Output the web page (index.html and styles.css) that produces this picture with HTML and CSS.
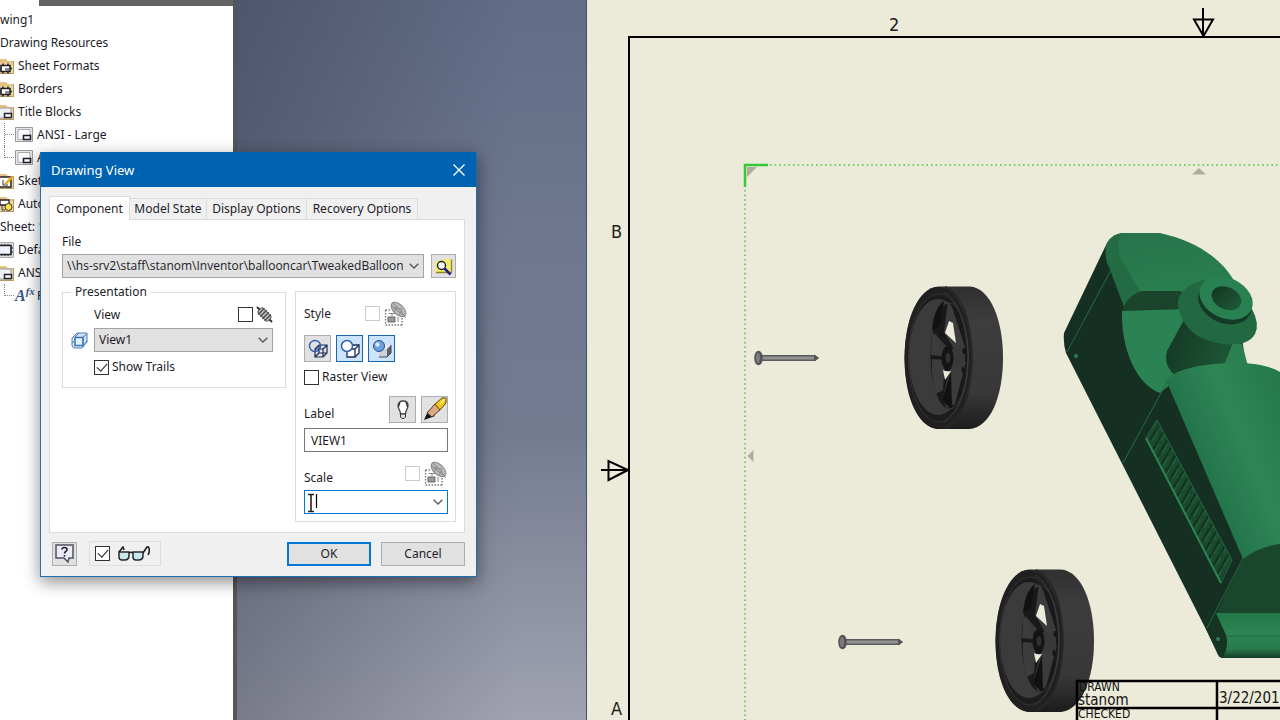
FILE: index.html
```html
<!DOCTYPE html>
<html lang="en">
<head>
<meta charset="utf-8">
<title>Drawing View</title>
<link rel="stylesheet" href="styles.css">
</head>
<body>
<svg class="defs" aria-hidden="true">
  <symbol id="i-folder" viewBox="0 0 16 16"><path d="M0 1h8l2 2h6v13H0z" fill="#e3c283"/><path d="M0 5h16v11H0z" fill="#efd6a0"/><path d="M15.500 3v12.500H0" fill="none" stroke="#b89862"/></symbol>
  <symbol id="i-border" viewBox="0 0 16 16"><use href="#i-folder"/><path d="M3 7.500h9v6H3z" fill="#fff" stroke="#222" stroke-width="1.600"/><path d="M5 5.500v2m5-2v2m-5 6v2m5-2v2M1 10.500h2m9 0h2" stroke="#222" stroke-width="1.600"/><path d="M7 10h4v3H7z" fill="#889"/></symbol>
  <symbol id="i-title" viewBox="0 0 16 16"><use href="#i-folder"/><path d="M0 4h13v10H0z" fill="#eef0f6" stroke="#99a"/><path d="M6.500 9.500h7v4h-7z" fill="#fff" stroke="#223" stroke-width="1.500"/></symbol>
  <symbol id="i-block" viewBox="0 0 18 16"><path d="M.5.500h17v14H.5z" fill="#e8e8ec" stroke="#999"/><path d="M3 2.500h12v10H3z" fill="#fafafa" stroke="#aaa"/><path d="M8.500 8.500h7v4h-7z" fill="#fff" stroke="#1c1c30" stroke-width="1.600"/></symbol>
  <symbol id="i-sketch" viewBox="0 0 16 16"><use href="#i-folder"/><path d="M1 4h12v10H1z" fill="#fff" stroke="#222" stroke-width="1.500"/><path d="M5 7v5h5" fill="none" stroke="#333"/><path d="M6 11l7-8 2 2-7 7z" fill="#e6a817"/></symbol>
  <symbol id="i-auto" viewBox="0 0 16 16"><use href="#i-folder"/><path d="M2 4h9v5H2z" fill="#fff" stroke="#222" stroke-width="1.300"/><circle cx="10.500" cy="11" r="3.500" fill="#ffe14a" stroke="#333"/><path d="M4 9v5h3" fill="none" stroke="#333"/></symbol>
  <symbol id="i-sheet" viewBox="0 0 16 16"><path d="M0 .5h15.500v15H0z" fill="#ddd" stroke="#aaa"/><path d="M1 3.500h12v9H1z" fill="#eef3ff" stroke="#222" stroke-width="1.600"/><path d="M4 2v2m3-2v2m3-2v2m-6 8v2m3-2v2m3-2v2M13 6h2m-2 4h2" stroke="#222"/></symbol>
  <symbol id="i-chev" viewBox="0 0 10 6"><path d="M.7.700 5 5 9.300.7" fill="none" stroke="#555" stroke-width="1.300"/></symbol>
  <symbol id="i-inherit" viewBox="0 0 24 25"><g fill="none" stroke="#777" stroke-width="1.400" stroke-dasharray="1.500 1.500"><path d="M1.500 9v15h17M1.500 9h6M18 17v7"/></g><path d="M4 16h7v5H4z" fill="#999" stroke="#666"/><path d="M8 12v3m6 1v5M5 12.500h6" stroke="#888"/><ellipse cx="14.500" cy="8.500" rx="9" ry="5" transform="rotate(43 14.500 8.500)" fill="#bbb" stroke="#888"/><path d="M7 4l15 13M9 2l12 13M13 5l-3 6m8-2-4 6m-5-8 9 1" stroke="#888" fill="none"/></symbol>
  <symbol id="wheel" viewBox="0 0 100 144" overflow="visible">
    <path d="M34 .5H66C86 2 99 33 99 72s-13 69-33 71H34C13 141 .5 110 .5 72S14 2 34 .5z" fill="url(#tire)"/>
    <ellipse cx="34" cy="72" rx="33.500" ry="71" fill="#202020"/>
    <ellipse cx="34.500" cy="72" rx="30" ry="64" fill="#1c1c1c" stroke="#333"/>
    <ellipse cx="34" cy="71" rx="29" ry="58" fill="#3b3b3b"/>
    <ellipse cx="45" cy="70" rx="19" ry="53" fill="#191919" stroke="#444" stroke-width=".7"/>
    <path d="M28 46L46 64l-1 7-18-2zM28 73l13 1-2 30-7 4c-3-9-5-24-4-35zM46 56L40 46l4-31 4 6 13 40-5 14zM62 76L51 118 43 122l-5-8 8-31z" fill="#3c3c3c"/>
    <path d="M28 44q2-22 12-29l-4 25zM38 114l9-28 1 36q-6-2-10-8z" fill="#111"/>
    <path d="M45 35L41 47l11 10-3-20zM39 84l2 10 6-9q-5 1-8-1z" fill="#ecead9"/>
    <path d="M30 46L44 63h9l8-3v20l-9 3-8-2z" fill="#393939"/>
    <ellipse cx="43.500" cy="72" rx="6" ry="12" fill="#141414"/><ellipse cx="44" cy="72" rx="2.500" ry="5" fill="#303030"/>
    <ellipse cx="60" cy="65" rx="1.500" ry="3" fill="#151515"/><ellipse cx="59" cy="84" rx="1.500" ry="3" fill="#151515"/>
    <path d="M41 1q25 11 27 71-2 58-27 70" fill="none" stroke="#272727" stroke-width="2"/>
    <path d="M40 6q21 12 24 66-2 50-24 64" fill="none" stroke="#404040" stroke-width=".8"/>
  </symbol>
  <symbol id="screw" viewBox="0 0 66 16"><path d="M8 5h53l4 3-4 3H8z" fill="url(#metal)"/><path d="M60 4.500l5 3.500-5 3.500z" fill="#555"/><ellipse cx="4.500" cy="8" rx="4.300" ry="7.300" fill="#555"/><ellipse cx="4" cy="8" rx="2" ry="5" fill="#7c7c7c"/></symbol>
</svg>

<main class="app">
  <aside class="browser">
    <ul class="tree">
      <li>wing1</li>
      <li>Drawing Resources</li>
      <li><svg class="ico"><use href="#i-border"/></svg>Sheet Formats</li>
      <li><svg class="ico"><use href="#i-border"/></svg>Borders</li>
      <li><svg class="ico"><use href="#i-title"/></svg>Title Blocks</li>
      <li class="child"><svg class="ico wide"><use href="#i-block"/></svg>ANSI - Large</li>
      <li class="child last"><svg class="ico wide"><use href="#i-block"/></svg>A</li>
      <li><svg class="ico"><use href="#i-sketch"/></svg>Sketch</li>
      <li><svg class="ico"><use href="#i-auto"/></svg>AutoCAD</li>
      <li>Sheet: 1</li>
      <li><svg class="ico"><use href="#i-sheet"/></svg>Default</li>
      <li><svg class="ico"><use href="#i-title"/></svg>ANSI</li>
      <li class="child last"><span class="fx">A<sup>fx</sup></span>Field</li>
    </ul>
  </aside>

  <section class="desk"></section>

  <section class="sheet">
    <svg class="drawing" viewBox="586 0 694 720" preserveAspectRatio="xMinYMin slice">
      <defs>
        <linearGradient id="tire" x1="0" y1="0" x2="0" y2="1"><stop offset="0" stop-color="#303030"/><stop offset=".25" stop-color="#3d3d3d"/><stop offset=".75" stop-color="#383838"/><stop offset="1" stop-color="#1c1c1c"/></linearGradient>
        <linearGradient id="metal" x1="0" y1="0" x2="0" y2="1"><stop offset="0" stop-color="#4b4b4b"/><stop offset=".5" stop-color="#a0a0a0"/><stop offset="1" stop-color="#4d4d4d"/></linearGradient>
        <linearGradient id="cover" gradientUnits="userSpaceOnUse" x1="1180" y1="470" x2="1290" y2="425"><stop offset="0" stop-color="#1c5536"/><stop offset=".14" stop-color="#23724a"/><stop offset=".6" stop-color="#2e8655"/><stop offset="1" stop-color="#267a4b"/></linearGradient>
        <linearGradient id="roof" x1="0" y1="0" x2=".3" y2="1"><stop offset="0" stop-color="#27734a"/><stop offset="1" stop-color="#298150"/></linearGradient>
        <linearGradient id="neck" x1="0" y1="0" x2="1" y2=".3"><stop offset="0" stop-color="#133522"/><stop offset="1" stop-color="#1d5536"/></linearGradient>
        <linearGradient id="axle" x1="0" y1="0" x2="0" y2="1"><stop offset="0" stop-color="#257849"/><stop offset=".45" stop-color="#2c8553"/><stop offset=".8" stop-color="#287a4b"/><stop offset="1" stop-color="#143c26"/></linearGradient>
        <pattern id="slats" width="9" height="13" patternUnits="userSpaceOnUse" patternTransform="rotate(-4)"><path d="M0 13L9 0" stroke="#12301f" stroke-width="2"/><path d="M2 14L11 1" stroke="#266c45"/></pattern>
      </defs>
      <path d="M586.500 0V720" stroke="#454a70"/>
      <g fill="none" stroke="#000" stroke-width="2">
        <path d="M629 720V37H1280"/>
        <path d="M1203 8V36M1194 19.500H1213L1203.500 36zM601 470H628M608.500 461V480L628 470z"/>
      </g>
      <g class="zone"><text x="889" y="31">2</text><text x="611" y="238">B</text><text x="611" y="715">A</text></g>
      <path d="M770 165H1280M745 190V720" fill="none" stroke="#4cc84c" stroke-width="1.500" stroke-dasharray="1.600 3"/>
      <path d="M745 187V165H768" fill="none" stroke="#34c838" stroke-width="2.500"/>
      <path d="M747 167H757L747 177zM1192 174.500L1199 168l7 6.500zM747.500 456l6-6v12z" fill="#aeac9f"/>
      <use href="#screw" x="754" y="350" width="66" height="16"/>
      <use href="#screw" x="838" y="634" width="66" height="16"/>
      <use href="#wheel" x="904" y="286" width="100" height="144"/>
      <use href="#wheel" x="995" y="569" width="100" height="144"/>
      <path d="M1064 333L1107 243Q1113 233 1124 233L1234 282 1246 366 1280 380V657H1220L1066 353Q1063 343 1064 333z" fill="#153022"/>
      <path d="M1107 243Q1113 233 1124 233H1160C1196 241 1222 258 1236 284L1210 290 1180 292H1142L1125 309 1110 269Q1103 256 1107 243z" fill="url(#roof)"/>
      <path d="M1107 245Q1104 259 1110 269L1125 309 1140 291 1120 257Q1115 240 1123 233 1111 235 1107 245z" fill="#236c43"/>
      <path d="M1122 311Q1127 295 1142 291H1181L1184 309z" fill="#1a452c"/>
      <path d="M1122 311L1184 309 1190 330 1178 378 1160 393C1135 384 1121 347 1122 311z" fill="#2b8252"/>
      <path d="M1224 364L1233 342 1242 344 1248 366z" fill="#2a8050"/>
      <path d="M1185 318L1167 351Q1163 366 1176 376L1224 364 1233 340z" fill="url(#neck)"/>
      <path d="M1178 303C1178 292 1190 282 1208 279L1252 309Q1260 324 1255 334C1246 350 1215 345 1200 337 1190 332 1178 318 1178 303z" fill="#226841"/>
      <ellipse cx="1225" cy="302" rx="28" ry="21" transform="rotate(25 1225 302)" fill="#143a25"/>
      <ellipse cx="1226" cy="298" rx="28" ry="20" transform="rotate(25 1226 298)" fill="#298050"/>
      <ellipse cx="1226.500" cy="298" rx="15.500" ry="11" transform="rotate(25 1226 298)" fill="url(#neck)"/>
      <path d="M1166 380Q1176 369 1206 365C1240 361 1265 363 1280 372V546L1243 559z" fill="url(#cover)"/>
      <path d="M1216 614L1243 559Q1258 547 1280 544V614z" fill="#1a462d"/>
      <path d="M1216 613H1280V658H1221z" fill="url(#axle)"/>
      <path d="M1216 613L1206 629 1218 655Q1221 660 1224 655 1229 645 1226 635z" fill="#153522"/>
      <circle cx="1218" cy="639" r="2" fill="#2b7d50"/><circle cx="1076" cy="356" r="2" fill="#2b7d50"/>
      <path d="M1111 270L1067 352M1167 382L1123 463M1243 558L1207 628M1227 636H1280" fill="none" stroke="#246b44"/>
      <path d="M1157 420L1146 438 1221 583 1232 560z" fill="#1b4a2f"/><path d="M1157 420L1146 438 1221 583 1232 560z" fill="url(#slats)" stroke="#226744"/>
      <path d="M1146 438L1221 583" stroke="#2a8453" stroke-width="2"/>
      <g fill="none" stroke="#000" stroke-width="2.500"><path d="M1280 681H1077V720M1077 708H1280M1217 681V720"/></g>
      <g class="stamp"><text x="1079" y="691">DRAWN</text><text class="big" x="1078" y="705">stanom</text><text class="big" x="1219" y="703">3/22/201</text><text x="1078" y="718">CHECKED</text></g>
    </svg>
  </section>
</main>

<form class="dialog" role="dialog" aria-labelledby="dlg-title">
  <header class="titlebar">
    <h1 id="dlg-title">Drawing View</h1>
    <button type="button" class="close" aria-label="Close"><svg width="12" height="12" viewBox="0 0 12 12"><path d="M.5.500l11 11M11.500.500l-11 11" stroke="#fff" stroke-width="1.300"/></svg></button>
  </header>
  <div class="dialog-body">
    <nav class="tabs" role="tablist">
      <button type="button" role="tab" class="tab active" aria-selected="true">Component</button>
      <button type="button" role="tab" class="tab t-model">Model State</button>
      <button type="button" role="tab" class="tab t-display">Display Options</button>
      <button type="button" role="tab" class="tab t-recovery">Recovery Options</button>
    </nav>
    <section class="page">
      <label class="file-label" for="file">File</label>
      <div class="file-row">
        <span class="combo path"><select id="file"><option>\\hs-srv2\staff\stanom\Inventor\ballooncar\TweakedBalloon</option></select><svg class="chev"><use href="#i-chev"/></svg></span>
        <button type="button" class="tool small" aria-label="Open file"><svg width="19" height="19" viewBox="0 0 19 19"><path d="M1 4h6l2-2h8v13H1z" fill="#f3ec72"/><path d="M17.500 2.500v13H2" fill="none" stroke="#8f8725" stroke-width="1.300"/><circle cx="7.500" cy="8.500" r="4" fill="#f6f8ff" stroke="#222" stroke-width="1.400"/><path d="M10.500 11.500l6 6" stroke="#20208c" stroke-width="2.500"/></svg></button>
      </div>
      <div class="columns">
        <fieldset class="group presentation">
          <legend>Presentation</legend>
          <div class="pres-head">
            <label for="view">View</label>
            <input type="checkbox" aria-label="Associative">
            <svg width="17" height="17" viewBox="0 0 17 17"><path d="M1 1l15 15" stroke="#333" stroke-width="2"/><g transform="rotate(45 8.500 8.500)"><rect x="1.500" y="5" width="14" height="7" rx="2" fill="#bbb" stroke="#555"/><path d="M4 4v9m3-9v9m3-9v9m3-9v9" stroke="#444" stroke-width="1.200"/></g></svg>
          </div>
          <div class="pres-view">
            <svg width="17" height="17" viewBox="0 0 17 17"><path d="M1 6l5-5h10v9l-5 6H3l-2-2z" fill="#cfe2f7" stroke="#4c7fb5"/><path d="M4 5.500h8v8H4z" fill="#e2effc" stroke="#3f75ad" stroke-width="1.500"/><path d="M4 5l4-4m4 4l4-3m-4 12l4-5M1 10h3m8-5v10" stroke="#4c7fb5"/></svg>
            <span class="combo"><select id="view"><option>View1</option></select><svg class="chev"><use href="#i-chev"/></svg></span>
          </div>
          <label class="check trails"><input type="checkbox" checked>Show Trails</label>
        </fieldset>
        <div class="group options">
          <div class="line style-line"><span class="cap">Style</span><input type="checkbox" disabled aria-label="Style from base"><svg width="24" height="25"><use href="#i-inherit"/></svg></div>
          <div class="styles">
            <button type="button" class="tool" aria-label="Hidden line"><svg width="20" height="20" viewBox="0 0 20 20" fill="none" stroke="#1d2a5a" stroke-width="1.200"><path d="M7 10l4-4h8v8l-4 4H7zM7 10h8v8m0-8l4-4M11 6v8h8m-8 0l-4 4"/><circle cx="7" cy="7" r="5.500" stroke="#2d5fb0" stroke-width="1.400"/></svg></button>
            <button type="button" class="tool on" aria-label="Hidden line removed"><svg width="20" height="20" viewBox="0 0 20 20" fill="#fff" stroke="#1d2a5a" stroke-width="1.300"><path d="M7 10l4-4h8v8l-4 4H7z"/><path d="M7 10h8v8m0-8l4-4" fill="none"/><circle cx="7" cy="7" r="5.500" stroke="#2d5fb0" stroke-width="1.500"/></svg></button>
            <button type="button" class="tool on" aria-label="Shaded"><svg width="20" height="20" viewBox="0 0 20 20"><path d="M7 10l4-4h8l-4 4z" fill="#e6e9ee"/><path d="M15 10l4-4v8l-4 4z" fill="#5a6472"/><path d="M7 10h8v8H7z" fill="#cdd2d9"/><path d="M7 18h8l4-4V6" fill="none" stroke="#3c4654"/><circle cx="7" cy="7" r="5.500" fill="#6e9fda" stroke="#2d4f8e"/><circle cx="5.500" cy="5.500" r="2.200" fill="#d3e6fb"/></svg></button>
          </div>
          <label class="check raster"><input type="checkbox">Raster View</label>
          <div class="line label-line"><label class="cap low" for="vlabel">Label</label>
            <span class="pair"><button type="button" class="tool" aria-label="Toggle label"><svg width="14" height="20" viewBox="0 0 14 20"><path d="M4.500 14C4.500 10 2 9 2 5.500 2 2.500 4 1 7 1s5 1.500 5 4.500c0 3.500-2.500 4.500-2.500 8.500z" fill="#fff" stroke="#444" stroke-width="1.300"/><path d="M4 2.500L2.500 7M10 2.500L11.500 7" stroke="#111"/><path d="M4.500 14h5v3l-1.500 1.500H6l-1.500-1.500z" fill="#ddd" stroke="#333"/></svg></button>
            <button type="button" class="tool" aria-label="Edit label"><svg width="25" height="25" viewBox="0 0 25 25"><path d="M2 23l4-9 7 5z" fill="#111"/><path d="M5 16L13 7l6 5-9 8z" fill="#d9a982" stroke="#4b3423"/><path d="M13 7l7-6h4v5l-6 7z" fill="#f7c614" stroke="#5b4708"/><path d="M18 7l5-5" stroke="#fff0a0" stroke-width="1.500"/></svg></button></span>
          </div>
          <input class="text" id="vlabel" type="text" value="VIEW1">
          <div class="line scale-line"><label class="cap low" for="scale">Scale</label><input type="checkbox" disabled aria-label="Scale from base"><svg width="24" height="25"><use href="#i-inherit"/></svg></div>
          <span class="combo scale"><input class="text" id="scale" type="text"><svg class="chev"><use href="#i-chev"/></svg>
            <svg class="ibeam" width="12" height="20" viewBox="0 0 12 20"><path d="M1 1.500h6M1 18.500h6M4 1.500v17" stroke="#222" stroke-width="1.600"/><path d="M9.500 1v14" stroke="#000" stroke-width="1.200"/><path d="M4 10v2" stroke="#c22" stroke-width="2"/></svg></span>
        </div>
      </div>
    </section>
    <footer class="actions">
      <button type="button" class="tool small" aria-label="Help"><svg width="19" height="19" viewBox="0 0 19 19"><path d="M1 1h17v13h-4l-1 4-4-4H1z" fill="#e9ebf7" stroke="#50525e" stroke-width="1.500"/><path d="M7 5.500q0-2 2.500-2T12 5.500q0 1.300-1.300 2T9.500 9.500M9.500 11v1.500" fill="none" stroke="#222" stroke-width="1.600"/></svg></button>
      <label class="preview"><input type="checkbox" checked aria-label="Preview"><svg width="34" height="15" viewBox="0 0 34 15"><path d="M2 6h10v5q-1 3-4 3H5q-3 0-3-3zM16 6h10v5q-1 3-4 3h-3q-3 0-3-3z" fill="#c9e8ec" stroke="#2a2a2a" stroke-width="1.500"/><path d="M12 7q2-1.500 4 0M2 6l4-5 1 3M26 7l4-6q3-1 2 6l-1 2" fill="none" stroke="#222" stroke-width="1.600"/></svg></label>
      <span class="confirm">
        <button type="submit" class="btn primary">OK</button>
        <button type="button" class="btn">Cancel</button>
      </span>
    </footer>
  </div>
</form>
</body>
</html>
```
FILE: styles.css
```css
* { box-sizing: border-box; }
body {
  margin: 0;
  font: 12px/16px "Noto Sans", "DejaVu Sans Condensed", sans-serif;
  color: #1c1c28;
  overflow: hidden;
}
button, input, select { font: inherit; color: inherit; margin: 0; }
svg { display: block; flex: none; }
.defs { position: absolute; width: 0; height: 0; }

.app { display: flex; height: 100vh; }
.browser {
  flex: none;
  width: 237px;
  border-right: 4px solid #55555a;
  background: linear-gradient(#636363, #636363) 39px 0 / 100% 6px no-repeat #fff;
}
.tree { list-style: none; margin: 0; padding: 8px 0 0; }
.tree li { display: flex; align-items: center; height: 23px; gap: 4px; white-space: nowrap; }
.ico { width: 16px; height: 16px; margin-left: -2px; }
.ico.wide { width: 18px; margin-left: 0; }
.tree .child { padding-left: 15px; position: relative; }
.child::before {
  content: "";
  position: absolute;
  left: 4px;
  top: 0;
  width: 9px;
  height: 23px;
  border-left: 1px dotted #888;
  background: repeating-linear-gradient(90deg, #888 0 1px, transparent 1px 2px) 0 11px / 100% 1px no-repeat;
}
.child.last::before { height: 12px; }
.fx { font: italic bold 16px/16px "Liberation Serif", serif; color: #35538a; width: 18px; }
.fx sup { font-size: 11px; line-height: 8px; }

.desk { flex: none; width: 349px; background: linear-gradient(90deg, rgba(30, 34, 50, .3), transparent 80%), linear-gradient(#626c86, #6f7890 35%, #747b91 60%, #a0a2b0); }
.sheet { flex: 1; min-width: 0; background: #ecead9; }
.drawing { width: 100%; height: 100%; }
.zone { font: 18px "DejaVu Sans Condensed", sans-serif; fill: #222; }
.stamp { font: 12px "DejaVu Sans Condensed", sans-serif; fill: #111; }
.stamp .big { font-size: 15px; }

.dialog {
  position: absolute;
  left: 40px;
  top: 152px;
  width: 437px;
  border: 1px solid #1c6fb0;
  border-top: 0;
  background: #f0f0f0;
  box-shadow: 0 5px 16px rgba(0, 0, 0, .45);
}
.titlebar {
  display: flex;
  align-items: center;
  justify-content: space-between;
  height: 35px;
  padding: 0 11px 0 10px;
  background: #0063b1;
  color: #fff;
}
.titlebar h1 { margin: 0; font-size: 13px; font-weight: 400; }
.close { border: 0; padding: 0; background: none; }
.dialog-body { padding: 9px 11px 10px 8px; }
.tabs { display: flex; align-items: flex-end; height: 23px; }
.tab { height: 21px; padding: 0; border: 1px solid #dcdcdc; border-left: 0; border-bottom: 0; background: #f0f0f0; white-space: nowrap; }
.tab.active { width: 81px; height: 24px; margin-bottom: -1px; border-left: 1px solid #dcdcdc; background: #fff; z-index: 1; }
.t-model { width: 77px; }
.t-display { width: 100px; }
.t-recovery { width: 111px; }
.page { border: 1px solid #dcdcdc; background: #fff; padding: 14px 8px 10px 12px; }
.file-label { display: block; }
.file-row { display: flex; gap: 7px; margin-top: 4px; }
.combo { position: relative; display: block; flex: 1; min-width: 0; }
.combo select {
  display: block;
  width: 100%;
  height: 24px;
  padding: 0 20px 0 4px;
  border: 1px solid #a3a3a3;
  border-radius: 0;
  background: #e1e1e1;
  appearance: none;
}
.path select { font-family: "Open Sans", "DejaVu Sans Condensed", sans-serif; }
.chev { position: absolute; right: 5px; top: 9px; width: 10px; height: 6px; pointer-events: none; }
.tool {
  display: grid;
  place-items: center;
  width: 27px;
  height: 27px;
  padding: 0;
  border: 1px solid #adadad;
  background: #e1e1e1;
}
.tool.small { width: 25px; height: 24px; }
.tool.on { border-color: #1a65ab; background: #cce4fb; }
.columns { display: flex; align-items: flex-start; gap: 9px; margin-top: 6px; }
.group { border: 1px solid #dcdcdc; margin: 0; min-width: 0; }
.presentation { flex: 1; padding: 6px 12px 12px 8px; }
.presentation legend { padding: 0 4px; margin-left: 0; }
.pres-head { display: flex; align-items: center; gap: 3px; padding-left: 23px; }
.pres-head label { flex: 1; }
.pres-view { display: flex; align-items: center; gap: 6px; margin-top: 5px; }
.check { display: flex; align-items: center; gap: 3px; }
.trails { margin: 7px 0 0 23px; }
input[type="checkbox"] {
  appearance: none;
  flex: none;
  width: 15px;
  height: 15px;
  border: 1px solid #333;
  background: #fff;
}
input[type="checkbox"]:disabled { border-color: #ccc; }
input[type="checkbox"]:checked::after {
  content: "";
  display: block;
  width: 9px;
  height: 5px;
  margin: 2px 0 0 2px;
  border: solid #222;
  border-width: 0 0 1px 1px;
  transform: rotate(-48deg);
}
.options { width: 161px; margin-top: 7px; padding: 9px 7px 7px 8px; }
.line { display: flex; align-items: center; gap: 4px; height: 25px; }
.line .cap { flex: 1; }
.line .low { padding-top: 8px; }
.style-line { padding-right: 40px; }
.scale-line { margin-top: 9px; }
.styles { display: flex; gap: 5px; margin-top: 9px; }
.raster { margin-top: 7px; }
.label-line { height: 27px; margin-top: 11px; }
.pair { display: flex; gap: 5px; }
.text { display: block; width: 100%; height: 24px; padding: 0 6px; border: 1px solid #777; background: #fff; outline: 0; }
.options > .text { margin-top: 5px; }
.scale { margin-top: 4px; }
.scale .text { border-color: #0078d7; }
.ibeam { position: absolute; left: 3px; top: 3px; }
.actions { display: flex; align-items: center; gap: 12px; margin-top: 8px; padding-left: 3px; }
.preview { display: flex; align-items: center; gap: 7px; height: 25px; padding: 0 9px 0 5px; border: 1px solid #dedede; }
.confirm { display: flex; gap: 10px; margin-left: auto; }
.btn { width: 84px; height: 24px; padding: 0; border: 1px solid #adadad; background: #e1e1e1; }
.primary { border: 2px solid #0078d7; }
```
